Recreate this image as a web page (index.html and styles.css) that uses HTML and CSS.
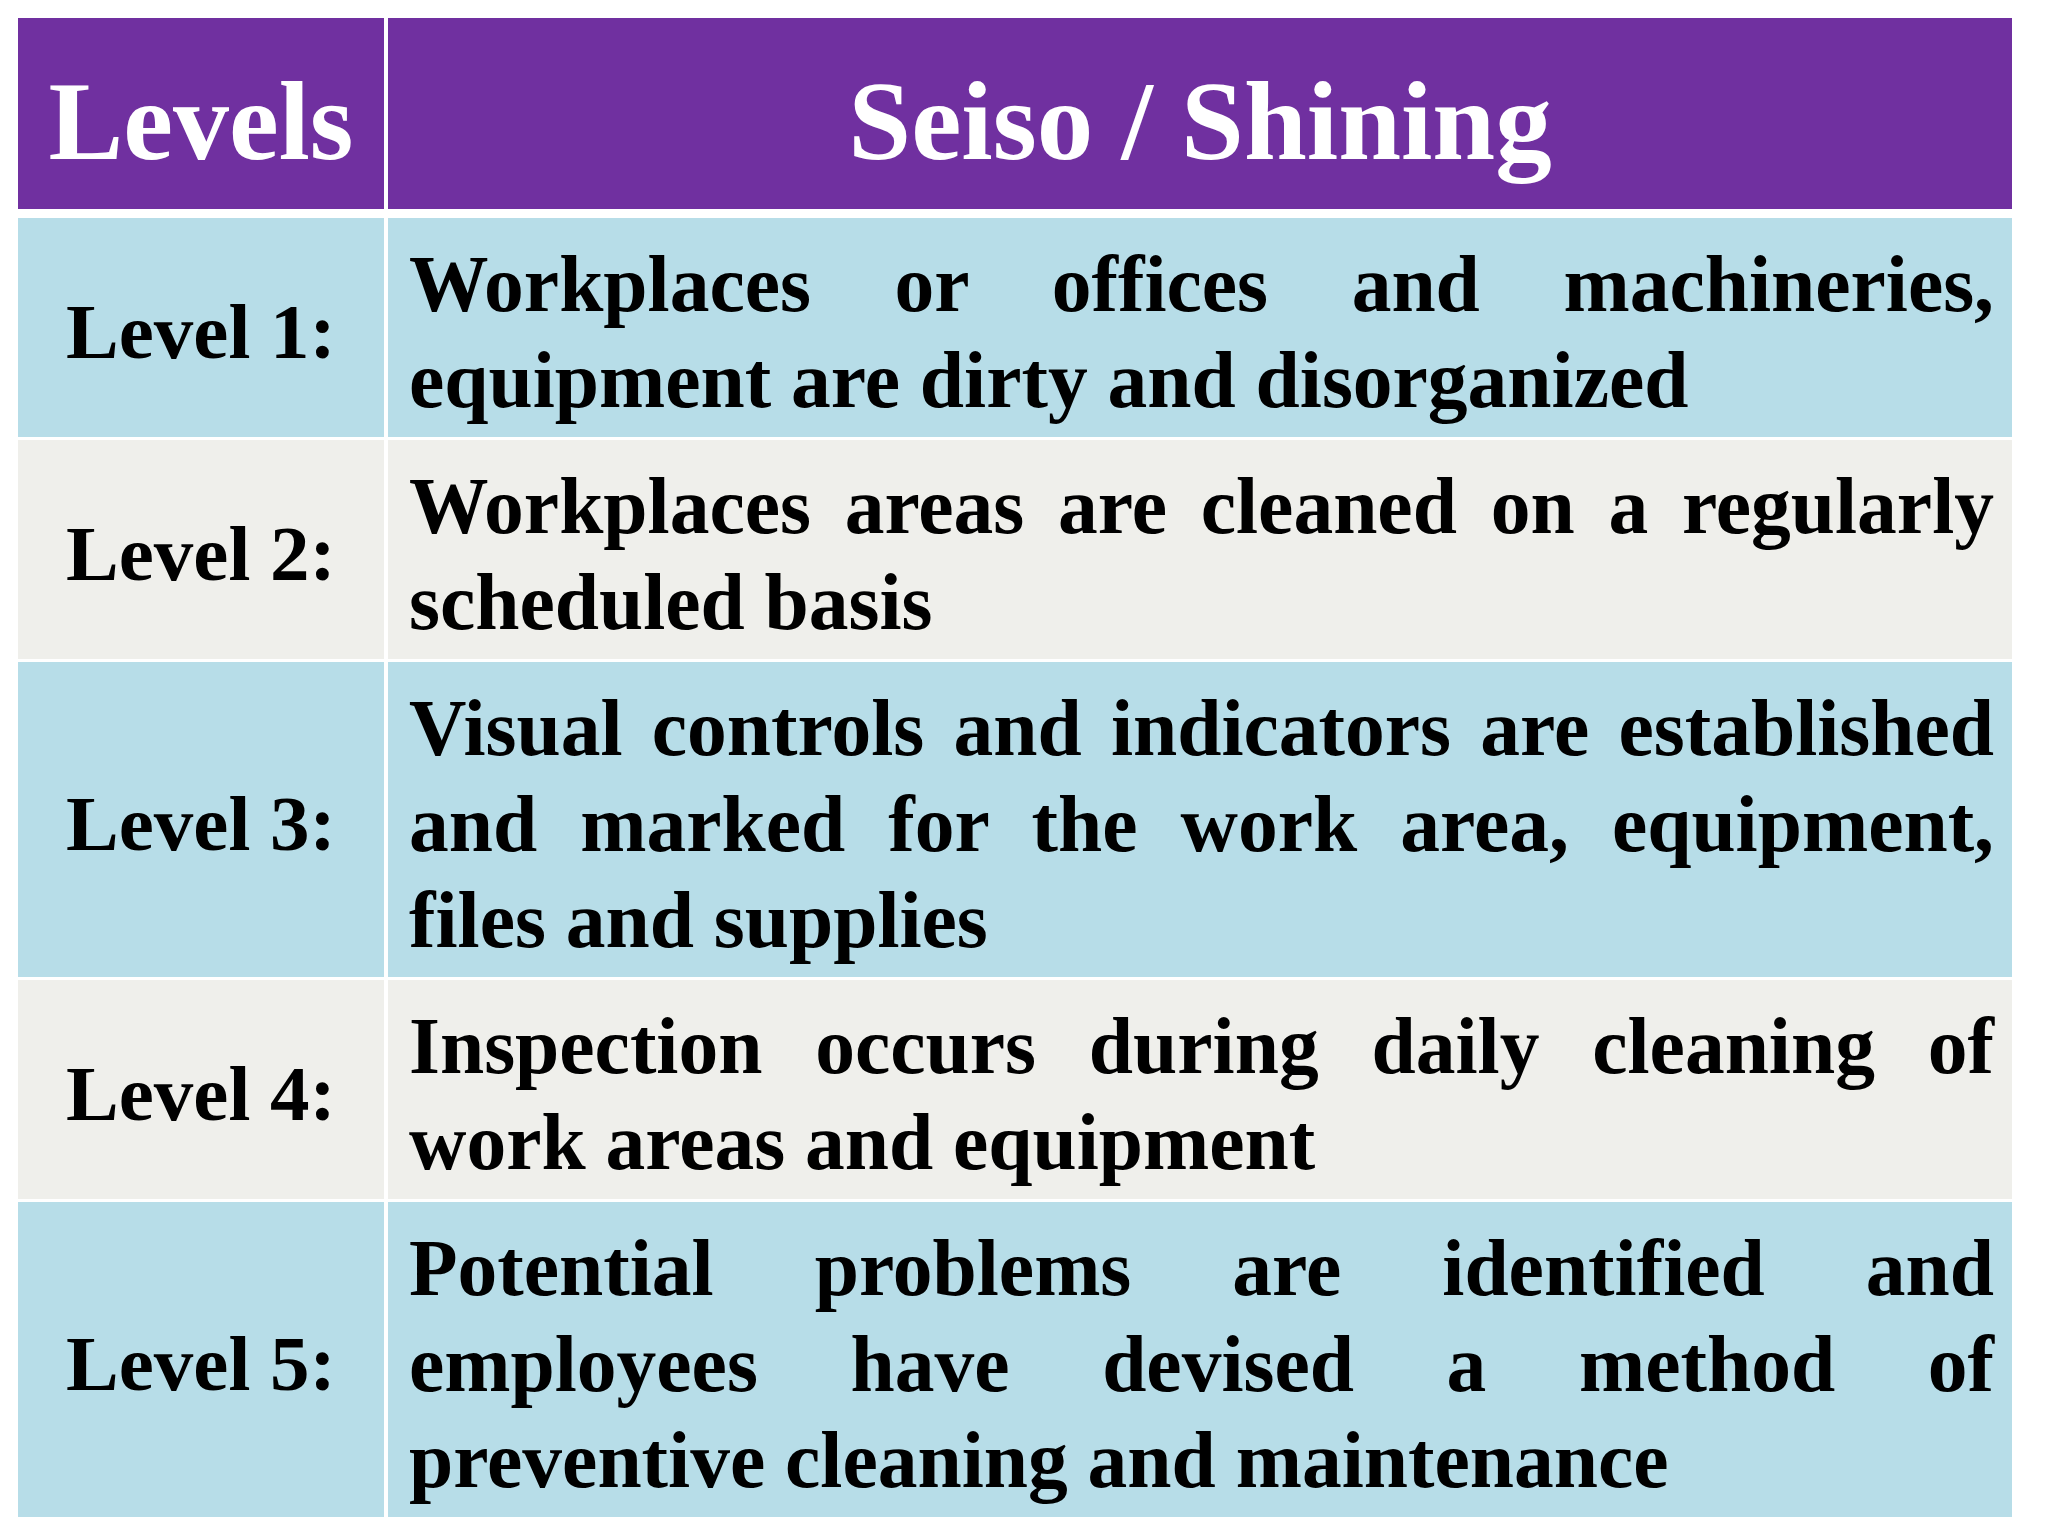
FILE: index.html
```html
<!DOCTYPE html>
<html lang="en">
<head>
<meta charset="utf-8">
<title>Seiso / Shining Levels</title>
<link rel="stylesheet" href="styles.css">
</head>
<body>
<div class="table">
  <div class="cell head lvl-head">Levels</div>
  <div class="cell head desc-head">Seiso / Shining</div>

  <div class="cell lvl blue">Level 1:</div>
  <div class="cell desc blue">
    <span class="ln j">Workplaces or offices and machineries,</span>
    <span class="ln">equipment are dirty and disorganized</span>
  </div>

  <div class="cell lvl gray">Level 2:</div>
  <div class="cell desc gray">
    <span class="ln j">Workplaces areas are cleaned on a regularly</span>
    <span class="ln">scheduled basis</span>
  </div>

  <div class="cell lvl blue">Level 3:</div>
  <div class="cell desc blue">
    <span class="ln j">Visual controls and indicators are established</span>
    <span class="ln j">and marked for the work area, equipment,</span>
    <span class="ln">files and supplies</span>
  </div>

  <div class="cell lvl gray">Level 4:</div>
  <div class="cell desc gray">
    <span class="ln j">Inspection occurs during daily cleaning of</span>
    <span class="ln">work areas and equipment</span>
  </div>

  <div class="cell lvl blue">Level 5:</div>
  <div class="cell desc blue">
    <span class="ln j">Potential problems are identified and</span>
    <span class="ln j">employees have devised a method of</span>
    <span class="ln">preventive cleaning and maintenance</span>
  </div>
</div>
</body>
</html>
```

FILE: styles.css
```css
html, body {
  margin: 0;
  padding: 0;
  background: #ffffff;
}

body {
  font-family: "Liberation Serif", "Times New Roman", serif;
  font-weight: bold;
  color: #000000;
}

.table {
  display: grid;
  grid-template-columns: 366px 1624px;
  column-gap: 4px;
  row-gap: 3px;
  margin: 18px 0 0 18px;
}

.cell {
  box-sizing: border-box;
}

.head {
  background: #7030a0;
  color: #ffffff;
  font-size: 112px;
  line-height: 134px;
  padding: 36px 0 21px;
  text-align: center;
  margin-bottom: 6px;
}

.desc-head {
  font-size: 113px;
}

.lvl {
  font-size: 79px;
  line-height: 96px;
  padding: 18px 0 9px;
  display: flex;
  align-items: center;
  justify-content: center;
}

.desc {
  font-size: 79.5px;
  line-height: 96px;
  padding: 18px 18px 9px 21px;
}

.ln {
  display: block;
  text-align: left;
}

.ln.j {
  text-align: justify;
  text-align-last: justify;
}

.blue {
  background: #b7dde8;
}

.gray {
  background: #efefeb;
}
```
